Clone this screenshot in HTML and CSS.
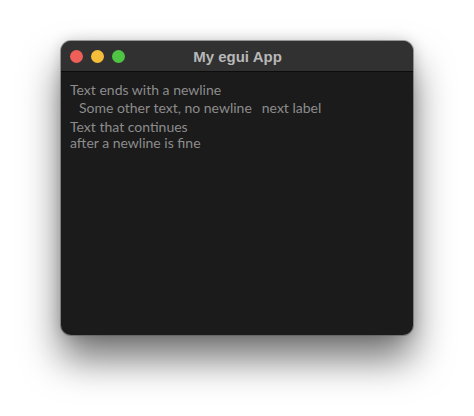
FILE: index.html
```html
<!DOCTYPE html>
<html>
<head>
<meta charset="utf-8">
<link rel="stylesheet" href="styles.css">
</head>
<body>
<div class="window">
  <div class="titlebar">
    <div class="lights">
      <span class="light red"></span>
      <span class="light yellow"></span>
      <span class="light green"></span>
    </div>
    <div class="title">My egui App</div>
  </div>
  <div class="content">
    <div class="label l1">Text ends with a newline</div>
    <div class="row">
      <span class="label indent">Some other text, no newline</span>
      <span class="label next">next label</span>
    </div>
    <div class="label multi">Text that continues<br>after a newline is fine</div>
  </div>
</div>
</body>
</html>
```

FILE: styles.css
```css
html, body {
  margin: 0;
  padding: 0;
  background: #ffffff;
}
body {
  width: 474px;
  height: 416px;
  overflow: hidden;
  padding: 41px 0 0 61px;
  box-sizing: border-box;
}
.window {
  width: 352px;
  height: 294px;
  border-radius: 10px;
  background: #1b1b1b;
  box-shadow: 0 0 0 1px rgba(90, 90, 90, 0.55), 0 24px 38px rgba(0, 0, 0, 0.55), 0 0 14px rgba(0, 0, 0, 0.18);
  overflow: hidden;
  display: flex;
  flex-direction: column;
}
.titlebar {
  height: 31px;
  flex: none;
  background: #313131;
  border-bottom: 1px solid #0c0c0c;
  box-sizing: border-box;
  display: flex;
  align-items: center;
  position: relative;
}
.lights {
  display: flex;
  gap: 8px;
  padding-left: 9px;
  padding-top: 1px;
}
.light {
  width: 13px;
  height: 13px;
  border-radius: 50%;
  display: block;
}
.red { background: #ee5f57; }
.yellow { background: #f5bd3a; }
.green { background: #4fc544; }
.title {
  position: absolute;
  left: 0;
  right: 0;
  top: 0;
  bottom: 0;
  display: flex;
  align-items: center;
  justify-content: center;
  font-family: "Liberation Sans", Arial, sans-serif;
  font-weight: bold;
  font-size: 15px;
  color: #b8b8b8;
  padding-left: 1px;
}
.content {
  padding: 10px 9px;
  font-family: Lato, "Open Sans", sans-serif;
  font-weight: 400;
  font-size: 14px;
  color: #8c8c8c;
}
.label {
  line-height: 16px;
}
.l1 {
  margin-bottom: 2px;
}
.row {
  display: flex;
  margin-bottom: 3px;
}
.indent {
  margin-left: 9px;
}
.next {
  margin-left: 10px;
}
.multi {
  line-height: 16px;
}
```
